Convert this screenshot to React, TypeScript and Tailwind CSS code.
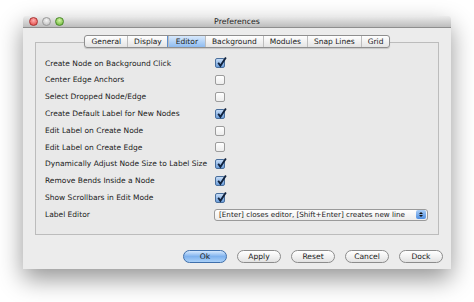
const ROWS: { label: string; checked: boolean }[] = [
  { label: "Create Node on Background Click", checked: true },
  { label: "Center Edge Anchors", checked: false },
  { label: "Select Dropped Node/Edge", checked: false },
  { label: "Create Default Label for New Nodes", checked: true },
  { label: "Edit Label on Create Node", checked: false },
  { label: "Edit Label on Create Edge", checked: false },
  { label: "Dynamically Adjust Node Size to Label Size", checked: true },
  { label: "Remove Bends Inside a Node", checked: true },
  { label: "Show Scrollbars in Edit Mode", checked: true },
];

const TABS = ["General", "Display", "Editor", "Background", "Modules", "Snap Lines", "Grid"];
const BUTTONS = ["Ok", "Apply", "Reset", "Cancel", "Dock"];

function Checkbox({ checked }: { checked: boolean }) {
  if (!checked) {
    return (
      <span className="block h-[10px] w-[10px] rounded-[2px] border border-[#9c9c9c] bg-gradient-to-b from-white to-[#ededed]" />
    );
  }
  return (
    <span className="relative block h-[10px] w-[10px] rounded-[2px] border border-[#4a6f9c] bg-gradient-to-b from-[#c6dcf6] to-[#6d9fdc]">
      <svg viewBox="0 0 10 10" className="absolute -top-[2px] left-[0px] h-[11px] w-[11px]">
        <path d="M2 5.2 L4 8 L9 0.5" fill="none" stroke="#10223d" strokeWidth="1.7" />
      </svg>
    </span>
  );
}

export default function App() {
  return (
    <div
      className="h-[302px] w-[474px] overflow-hidden bg-white pl-[23px] pt-[16px] text-[#1a1a1a]"
      style={{ fontFamily: '"DejaVu Sans", Verdana, sans-serif' }}
    >
      <div className="h-[253px] w-[428px] rounded-t-[4px] bg-[#ececec] shadow-[0_10px_24px_rgba(0,0,0,0.42)]">
        {/* title bar */}
        <div className="relative flex h-[12px] items-center rounded-t-[4px] border-b border-[#8e8e8e] bg-gradient-to-b from-[#ececec] to-[#bdbdbd] pl-[6px]">
          <div className="flex gap-[4px]">
            <span className="h-[9px] w-[9px] rounded-full border border-[#a33] bg-[radial-gradient(circle_at_50%_35%,#ffb0b0,#e0403c)]" />
            <span className="h-[9px] w-[9px] rounded-full border border-[#999] bg-[radial-gradient(circle_at_50%_35%,#f4f4f4,#b8b8b8)]" />
            <span className="h-[9px] w-[9px] rounded-full border border-[#4a8a2a] bg-[radial-gradient(circle_at_50%_35%,#d4f5a8,#62b02c)]" />
          </div>
          <div className="absolute inset-0 flex items-center justify-center text-[7.8px] text-[#222]">
            Preferences
          </div>
        </div>

        {/* body */}
        <div className="px-[12px] pt-[7px]">
          <div className="relative z-10 flex justify-center">
            <div className="flex h-[13px] overflow-hidden rounded-[3px] border border-[#8f8f8f] bg-gradient-to-b from-white to-[#e4e4e4] shadow-[0_1px_1px_rgba(0,0,0,0.15)]">
              {TABS.map((t, i) => (
                <div
                  key={t}
                  className={`flex items-center px-[6px] text-[7.5px] leading-none ${
                    i > 0 ? "border-l border-[#bdbdbd]" : ""
                  } ${
                    t === "Editor"
                      ? "border-[#5a8fd0] bg-gradient-to-b from-[#d8e9fc] to-[#8fbcf0] px-[7px] outline outline-1 outline-[#5d8fcf]"
                      : ""
                  } ${t === "General" ? "pl-[7px]" : ""}`}
                >
                  {t}
                </div>
              ))}
            </div>
          </div>

          <div className="-mt-[6px] h-[193px] border border-[#bcbcbc] bg-[#e9e9e9] pl-[9px] pt-[12px]">
            {ROWS.map((r) => (
              <div key={r.label} className="flex h-[16.8px] items-center">
                <span className="w-[170px] text-[7.5px] leading-none">{r.label}</span>
                <Checkbox checked={r.checked} />
              </div>
            ))}
            <div className="flex h-[16.8px] items-center">
              <span className="w-[169px] text-[7.5px] leading-none">Label Editor</span>
              <div className="flex h-[12px] w-[214px] items-center justify-between rounded-[3px] border border-[#9a9a9a] bg-gradient-to-b from-white to-[#ececec] pl-[4px] pr-[1px]">
                <span className="text-[7.2px] leading-none">
                  [Enter] closes editor, [Shift+Enter] creates new line
                </span>
                <span className="flex h-[9px] w-[10px] flex-col items-center justify-center gap-[1px] rounded-[2px] bg-gradient-to-b from-[#a9cdf6] to-[#4e8ee0]">
                  <span className="h-0 w-0 border-x-[2px] border-b-[2px] border-x-transparent border-b-[#111]" />
                  <span className="h-0 w-0 border-x-[2px] border-t-[2px] border-x-transparent border-t-[#111]" />
                </span>
              </div>
            </div>
          </div>
        </div>

        {/* buttons */}
        <div className="flex justify-end gap-[10px] pr-[8px] pt-[15px]">
          {BUTTONS.map((b) => (
            <div
              key={b}
              className={`flex h-[13px] w-[44px] items-center justify-center rounded-full border text-[7.6px] leading-none ${
                b === "Ok"
                  ? "border-[#3f6fab] bg-gradient-to-b from-[#d5e8fd] via-[#7fb2ee] to-[#a9d0f8]"
                  : "border-[#8c8c8c] bg-gradient-to-b from-white via-[#f2f2f2] to-[#e2e2e2]"
              }`}
            >
              {b}
            </div>
          ))}
        </div>
      </div>
    </div>
  );
}
